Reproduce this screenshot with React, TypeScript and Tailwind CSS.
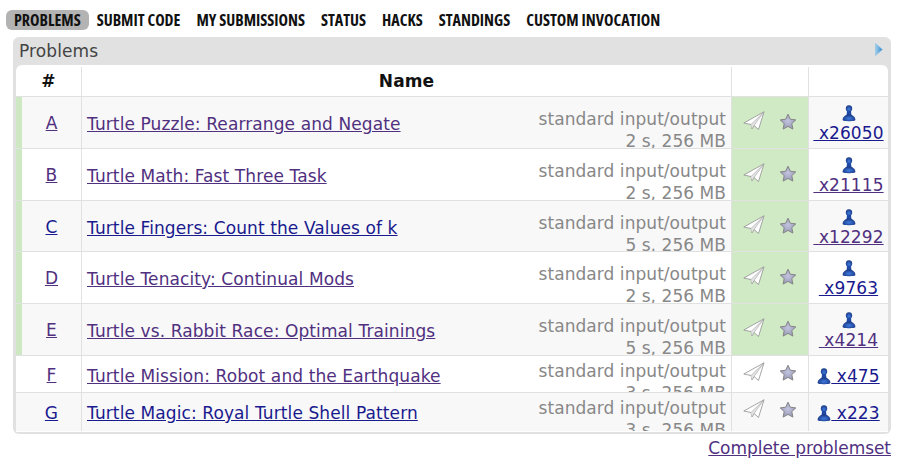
const NAV = ['PROBLEMS', 'SUBMIT CODE', 'MY SUBMISSIONS', 'STATUS', 'HACKS', 'STANDINGS', 'CUSTOM INVOCATION'];

interface Problem {
  letter: string;
  name: string;
  limits: string;
  count: string;
  solved: boolean;
  visited: boolean;
  countVisited: boolean;
  rowClass: string;
}

const VISITED = 'text-[#50307f]';
const LINK = 'text-[#1a1a8f]';

const PROBLEMS: Problem[] = [
  { letter: 'A', name: 'Turtle Puzzle: Rearrange and Negate', limits: '2 s, 256 MB', count: '26050', solved: true, visited: true, countVisited: false, rowClass: 'h-[52px]' },
  { letter: 'B', name: 'Turtle Math: Fast Three Task', limits: '2 s, 256 MB', count: '21115', solved: true, visited: true, countVisited: true, rowClass: 'h-[52px]' },
  { letter: 'C', name: 'Turtle Fingers: Count the Values of k', limits: '5 s, 256 MB', count: '12292', solved: true, visited: false, countVisited: true, rowClass: 'h-[51px]' },
  { letter: 'D', name: 'Turtle Tenacity: Continual Mods', limits: '2 s, 256 MB', count: '9763', solved: true, visited: true, countVisited: false, rowClass: 'h-[52px]' },
  { letter: 'E', name: 'Turtle vs. Rabbit Race: Optimal Trainings', limits: '5 s, 256 MB', count: '4214', solved: true, visited: true, countVisited: true, rowClass: 'h-[52px]' },
  { letter: 'F', name: 'Turtle Mission: Robot and the Earthquake', limits: '3 s, 256 MB', count: '475', solved: false, visited: true, countVisited: false, rowClass: 'h-[37px]' },
  { letter: 'G', name: 'Turtle Magic: Royal Turtle Shell Pattern', limits: '3 s, 256 MB', count: '223', solved: false, visited: false, countVisited: false, rowClass: 'h-[39px]' },
];

function PlaneIcon() {
  return (
    <svg width="22" height="20" viewBox="0 0 22 20" className="shrink-0">
      <path d="M0.8 12 L21 0.8 L15.5 18.5 L11 14.5 L9 18 L8 13.5 Z" fill="#fff" stroke="#8f8f8f" strokeWidth="0.8" strokeLinejoin="round" />
      <path d="M8 13.5 L21 0.8 L11 14.5 L9 18" fill="#e4e4e4" stroke="#a5a5a5" strokeWidth="0.6" strokeLinejoin="round" />
    </svg>
  );
}

function StarIcon({ id }: { id: string }) {
  return (
    <svg width="18" height="18" viewBox="0 0 18 18" className="shrink-0">
      <defs>
        <radialGradient id={id} cx="0.5" cy="0.45" r="0.6">
          <stop offset="0" stopColor="#c3c5e0" />
          <stop offset="1" stopColor="#9294b0" />
        </radialGradient>
      </defs>
      <path
        d="M9 1.2 L11.3 6.2 L16.8 6.9 L12.8 10.6 L13.9 16.1 L9 13.4 L4.1 16.1 L5.2 10.6 L1.2 6.9 L6.7 6.2 Z"
        fill={`url(#${id})`}
        stroke="#858585"
        strokeWidth="1"
        strokeLinejoin="round"
      />
    </svg>
  );
}

function UserIcon({ id }: { id: string }) {
  return (
    <svg width="14" height="17" viewBox="0 0 14 17" className="shrink-0">
      <defs>
        <radialGradient id={id} cx="0.5" cy="0.6" r="0.6">
          <stop offset="0" stopColor="#3f7be0" />
          <stop offset="1" stopColor="#18357f" />
        </radialGradient>
      </defs>
      <ellipse cx="7" cy="3.6" rx="3.2" ry="3.4" fill={`url(#${id})`} />
      <path d="M5 6 L9 6 L9.4 10 L4.6 10 Z" fill="#1f4aa6" />
      <path d="M0.6 15 C0.6 11.5 4 9.6 7 9.6 C10 9.6 13.4 11.5 13.4 15 C13.4 16.6 0.6 16.6 0.6 15 Z" fill={`url(#${id})`} />
    </svg>
  );
}

function Row({ p, even }: { p: Problem; even: boolean }) {
  const linkColor = p.visited ? VISITED : LINK;
  const tall = p.solved;
  return (
    <div className={`flex border-t border-[#e1e1e1] overflow-hidden ${p.rowClass} ${even ? 'bg-[#f8f8f8]' : 'bg-white'}`}>
      <div className={`w-[66px] shrink-0 flex items-center justify-center pt-[3px] border-r border-[#e1e1e1] border-l-[6px] ${p.solved ? 'border-l-[#cfe8c4]' : 'border-l-transparent'}`}>
        <a className={`underline ${linkColor}`}>{p.letter}</a>
      </div>
      <div className="flex-1 flex items-start justify-between pl-[5px] pr-[5px] border-r border-[#e1e1e1]">
        <a className={`underline ${linkColor} ${tall ? 'pt-[15px]' : 'pt-[8px]'}`}>{p.name}</a>
        <div className={`text-right text-[#888] leading-[22px] tracking-[0.05px] whitespace-nowrap ${tall ? 'pt-[11px]' : 'pt-[4px]'}`}>
          <div>standard input/output</div>
          <div>{p.limits}</div>
        </div>
      </div>
      <div className={`w-[77px] shrink-0 flex items-start pl-[11px] border-r border-[#e1e1e1] ${tall ? 'pt-[14px]' : 'pt-[6px]'} ${p.solved ? 'bg-[#d0eac6]' : ''}`}>
        <PlaneIcon />
        <span className="ml-[14px] mt-[2px]">
          <StarIcon id={`star-${p.letter}`} />
        </span>
      </div>
      <div className="w-[79px] shrink-0">
        {tall ? (
          <a className={`flex flex-col items-center pt-[8px] leading-[22px] ${p.countVisited ? VISITED : LINK}`}>
            <UserIcon id={`user-${p.letter}`} />
            <span className="underline whitespace-pre">{` x${p.count}`}</span>
          </a>
        ) : (
          <a className={`flex items-center justify-center pt-[8px] ${LINK}`}>
            <UserIcon id={`user-${p.letter}`} />
            <span className="underline whitespace-pre">{` x${p.count}`}</span>
          </a>
        )}
      </div>
    </div>
  );
}

export default function App() {
  return (
    <div className="w-[898px] h-[465px] bg-white overflow-hidden text-[17px] tracking-[0.1px] text-[#222] font-['Verdana','DejaVu_Sans',sans-serif]">
      <div className="flex items-center h-[37px] pl-[6px] pt-[3px] text-[#111]">
        {NAV.map((item, i) => (
          <span
            key={item}
            className={`px-[8px] font-['Open_Sans','Liberation_Sans',sans-serif] font-stretch-condensed font-bold text-[16px] tracking-normal leading-[20px] whitespace-nowrap ${i === 0 ? 'bg-[#b3b3b3] rounded-[6px]' : ''}`}
          >
            {item}
          </span>
        ))}
      </div>

      <div className="mx-[13px] w-[878px] h-[397px] bg-[#e1e1e1] rounded-[6px] px-[3px] pb-[2px]">
        <div className="flex items-center justify-between h-[28px] pl-[3px] pr-[5px] text-[#444]">
          <span className="pt-[1px]">Problems</span>
          <svg width="8" height="13" viewBox="0 0 8 13" className="mb-[3px]">
            <defs>
              <linearGradient id="arrow" x1="0" y1="0" x2="1" y2="0">
                <stop offset="0" stopColor="#9fd0ee" />
                <stop offset="1" stopColor="#2f86cc" />
              </linearGradient>
            </defs>
            <path d="M0.5 0.5 L7.5 6.5 L0.5 12.5 Z" fill="url(#arrow)" stroke="#8fc0e0" strokeWidth="0.6" />
          </svg>
        </div>
        <div className="bg-white rounded-t-[6px] overflow-hidden h-[367px]">
          <div className="flex h-[31px] font-bold text-[#111] items-stretch pt-[2px]">
            <div className="w-[66px] flex items-center justify-center border-r border-[#e1e1e1]">#</div>
            <div className="flex-1 flex items-center justify-center border-r border-[#e1e1e1]">Name</div>
            <div className="w-[77px] border-r border-[#e1e1e1]" />
            <div className="w-[79px]" />
          </div>
          {PROBLEMS.map((p, i) => (
            <Row key={p.letter} p={p} even={i % 2 === 0} />
          ))}
        </div>
      </div>

      <div className="text-right pr-[7px] pt-[2px] tracking-[-0.05px]">
        <a className={`underline ${VISITED}`}>Complete problemset</a>
      </div>
    </div>
  );
}
